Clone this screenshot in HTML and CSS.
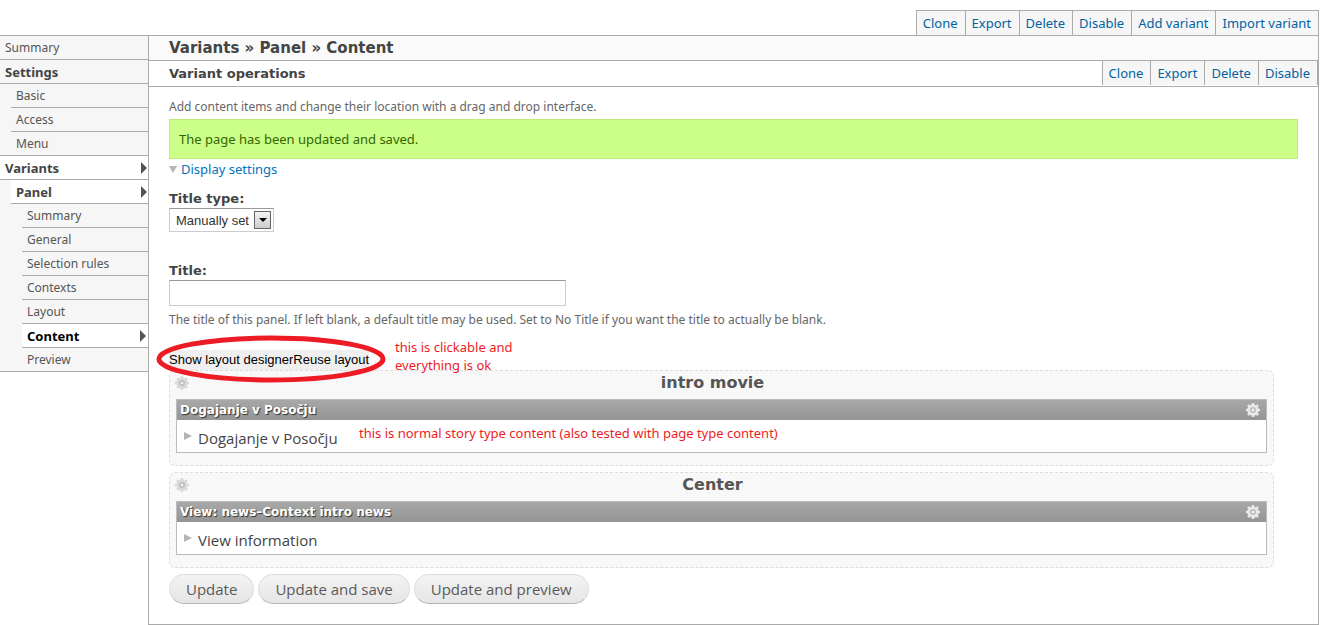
FILE: index.html
```
<!DOCTYPE html>
<html lang="en">
<head>
<meta charset="utf-8">
<title>Variants » Panel » Content</title>
<link rel="stylesheet" href="styles.css">
</head>
<body>
<svg class="defs" aria-hidden="true">
  <symbol id="gear" viewBox="0 0 16 16">
    <path d="M6.900 1h2.200l.5 1.700 1.200.5 1.600-.9 1.400 1.400-.9 1.500.6 1.300 1.600.4v2.200l-1.700.5-.5 1.200.9 1.600-1.400 1.400-1.600-.9-1.200.6L9.100 15H6.900l-.5-1.600-1.200-.6-1.600.9-1.400-1.400.9-1.600-.5-1.200L.9 9.100V6.900l1.700-.4.5-1.300-.9-1.500 1.400-1.400 1.600.9 1.200-.5z"/>
    <circle class="gear-ring" cx="8" cy="8" r="3"/>
    <circle class="gear-hub" cx="8" cy="8" r="1.500"/>
  </symbol>
</svg>

<nav class="actions" aria-label="Page operations">
  <a href="#">Clone</a><a href="#">Export</a><a href="#">Delete</a><a href="#">Disable</a><a href="#">Add variant</a><a href="#">Import variant</a>
</nav>

<div class="layout">
  <nav class="sidebar" aria-label="Page sections">
    <a href="#">Summary</a>
    <a href="#" class="section">Settings</a>
    <div class="sub">
      <a href="#">Basic</a>
      <a href="#">Access</a>
      <a href="#">Menu</a>
    </div>
    <div class="rule"></div>
    <a href="#" class="section open">Variants</a>
    <div class="sub">
      <a href="#" class="section open">Panel</a>
      <div class="sub">
        <a href="#">Summary</a>
        <a href="#">General</a>
        <a href="#">Selection rules</a>
        <a href="#">Contexts</a>
        <a href="#">Layout</a>
        <a href="#" class="section open current">Content</a>
        <a href="#">Preview</a>
      </div>
    </div>
    <div class="rule"></div>
  </nav>

  <main class="main">
    <h1 class="title">Variants » Panel » Content</h1>
    <div class="operations">
      <h2>Variant operations</h2>
      <nav class="actions inner" aria-label="Variant operations">
        <a href="#">Clone</a><a href="#">Export</a><a href="#">Delete</a><a href="#">Disable</a>
      </nav>
    </div>

    <form class="content">
      <p class="hint">Add content items and change their location with a drag and drop interface.</p>
      <div class="message" role="status">The page has been updated and saved.</div>
      <div class="display-toggle"><span class="arrow-down"></span><a href="#">Display settings</a></div>

      <div class="field">
        <label for="title-type">Title type:</label>
        <div class="select">
          <select id="title-type"><option>Manually set</option><option>No title</option></select>
          <span class="select-arrow" aria-hidden="true"></span>
        </div>
      </div>
      <div class="field title-field">
        <label for="title">Title:</label>
        <input id="title" type="text">
        <p class="hint">The title of this panel. If left blank, a default title may be used. Set to No Title if you want the title to actually be blank.</p>
      </div>

      <div class="designer">
        <button type="button">Show layout designer</button><button type="button">Reuse layout</button>
        <svg class="ring" viewBox="0 0 230 48" aria-hidden="true"><ellipse cx="115" cy="24" rx="112" ry="21"/></svg>
        <p class="note note-links">this is clickable and<br>everything is ok</p>
      </div>

      <section class="region">
        <header>
          <button type="button" class="gear" aria-label="Region settings"><svg><use href="#gear"/></svg></button>
          <h3>intro movie</h3>
        </header>
        <article class="pane">
          <div class="pane-title"><h4>Dogajanje v Posočju</h4><button type="button" class="gear" aria-label="Pane settings"><svg><use href="#gear"/></svg></button></div>
          <div class="pane-body"><span class="arrow-right"></span>Dogajanje v Posočju<p class="note note-pane">this is normal story type content (also tested with page type content)</p></div>
        </article>
      </section>

      <section class="region">
        <header>
          <button type="button" class="gear" aria-label="Region settings"><svg><use href="#gear"/></svg></button>
          <h3>Center</h3>
        </header>
        <article class="pane">
          <div class="pane-title"><h4>View: news–Context intro news</h4><button type="button" class="gear" aria-label="Pane settings"><svg><use href="#gear"/></svg></button></div>
          <div class="pane-body"><span class="arrow-right"></span>View information</div>
        </article>
      </section>

      <div class="buttons">
        <button type="button">Update</button>
        <button type="button">Update and save</button>
        <button type="button">Update and preview</button>
      </div>
    </form>
  </main>
</div>
</body>
</html>
```
FILE: styles.css
```
* {
  box-sizing: border-box;
}

body {
  margin: 0;
  padding: 10px 1px 0 0;
  background: #fff;
  color: #444;
  font: 12px/24px "Noto Sans", sans-serif;
}

h1, h2, h3, h4, p {
  margin: 0;
}

h1, h2, h3, h4, label {
  font-family: "DejaVu Sans", sans-serif;
  font-weight: bold;
}

a {
  color: #0074bd;
  text-decoration: none;
}

button {
  padding: 0;
  border: 0;
  background: none;
  color: inherit;
  cursor: pointer;
}

.defs {
  position: absolute;
  width: 0;
  height: 0;
}

/* Operation tabs */
.actions {
  display: flex;
  justify-content: flex-end;
  font-size: 13px;
}

.actions a {
  height: 25px;
  padding: 0 7px 0 6px;
  border: 1px solid #aaa;
  border-width: 1px 0 0 1px;
  background: #f6f6f6;
  color: #0062a0;
}

.actions a:last-child {
  border-right-width: 1px;
}

.actions.inner a {
  height: 24px;
  border-top: 0;
}

/* Sidebar */
.layout {
  display: flex;
  align-items: flex-start;
}

.sidebar {
  flex: 0 0 148px;
  border-top: 1px solid #aaa;
  background: #f6f6f6;
}

.sidebar a {
  display: block;
  height: 24px;
  padding-left: 5px;
  border-bottom: 1px solid #aaa;
  color: #555;
}

.rule {
  height: 1px;
  margin-top: -1px;
  background: #aaa;
}

.sub {
  margin-left: 11px;
}

.sidebar .section {
  color: #444;
  font-size: 13px;
  font-weight: bold;
}

.sidebar .open {
  display: flex;
  align-items: center;
  justify-content: space-between;
  padding-right: 1px;
  background: #fff;
}

.sidebar .open::after {
  content: "";
  border: solid transparent;
  border-width: 6px 0 6px 6px;
  border-left-color: #555;
}

.sidebar .current {
  padding-right: 2px;
  color: #000;
}

/* Main column */
.main {
  flex: 1;
  min-width: 0;
  border: 1px solid #aaa;
}

.title {
  padding-left: 20px;
  border-bottom: 1px solid #aaa;
  background: #fafafa;
  font-size: 15px;
  line-height: 24px;
}

.operations {
  display: flex;
  justify-content: space-between;
  height: 26px;
  padding-left: 20px;
  border-bottom: 1px solid #aaa;
}

.operations h2 {
  font-size: 13px;
  line-height: 25px;
}

.content {
  padding: 12px 20px 20px;
}

.hint {
  color: #666;
  line-height: 16px;
}

.message {
  margin-top: 4px;
  padding: 0 9px;
  border: 1px solid #be7;
  background: #cf8;
  color: #360;
  font-size: 13px;
  line-height: 38px;
}

.display-toggle {
  display: flex;
  align-items: center;
  gap: 4px;
  font-size: 13px;
  line-height: 20px;
}

.arrow-down {
  border: solid transparent;
  border-width: 7px 4px 0;
  border-top-color: #b4b4b4;
}

.field {
  display: flex;
  flex-direction: column;
  align-items: flex-start;
  margin-top: 11px;
}

.field label {
  font-size: 13px;
  line-height: 18px;
}

.title-field {
  margin-top: 30px;
}

.title-field .hint {
  margin-top: 6px;
}

.title-field input {
  width: 397px;
  max-width: 100%;
  height: 26px;
  padding: 0 6px;
  border: 1px solid #ccc;
  border-top-color: #999;
  font: 13px "Liberation Sans", sans-serif;
}

.select {
  display: grid;
  align-items: center;
}

.select select,
.select-arrow {
  grid-area: 1 / 1;
}

.select select {
  height: 24px;
  padding: 0 24px 0 6px;
  border: 1px solid #ccc;
  border-top-color: #999;
  border-radius: 0;
  appearance: none;
  background: #fff;
  color: #333;
  font: 13px "Liberation Sans", sans-serif;
}

.select-arrow {
  display: grid;
  place-items: center;
  justify-self: end;
  width: 17px;
  height: 18px;
  margin-right: 3px;
  border: 1px solid #666;
  background: linear-gradient(#f4f4f4, #ccc);
  pointer-events: none;
}

.select-arrow::after {
  content: "";
  border: solid transparent;
  border-width: 4px 4px 0;
  border-top-color: #000;
}

/* Layout designer links */
.designer {
  position: relative;
  display: flex;
  margin-top: 22px;
}

.designer button {
  height: 20px;
  background: #efefef;
  color: #000;
  font: 13px/20px "Liberation Sans", sans-serif;
}

.ring {
  position: absolute;
  z-index: 1;
  top: -15px;
  left: -13px;
  width: 230px;
  height: 48px;
  fill: none;
  stroke: #ed1c24;
  stroke-width: 5px;
  pointer-events: none;
}

.note {
  position: absolute;
  color: #ed1c24;
  font: 13px/18px "Noto Sans", sans-serif;
  white-space: nowrap;
}

.note-links {
  z-index: 1;
  top: -12px;
  left: 226px;
}

.note-pane {
  top: 4px;
  left: 182px;
}

/* Regions and panes */
.region {
  margin: 0 24px 6px 0;
  padding: 0 6px 12px;
  border: 1px dashed #ddd;
  border-radius: 6px;
  background: #f8f8f8;
}

.region header {
  display: grid;
  grid-template-columns: 16px 1fr 32px;
  height: 28px;
  margin-left: -2px;
}

.region h3 {
  color: #555;
  font-size: 16px;
  line-height: 23px;
  text-align: center;
}

.gear {
  width: 16px;
  height: 16px;
}

.gear svg {
  display: block;
  width: 16px;
  height: 16px;
}

.region header .gear {
  margin-top: 4px;
  fill: #dadada;
}

.gear-ring {
  fill: #bcbcbc;
}

.gear-hub {
  fill: #eee;
}

.pane {
  border: 1px solid #bbb;
  background: #fff;
}

.pane-title {
  display: flex;
  align-items: center;
  justify-content: space-between;
  height: 20px;
  padding: 0 5px 0 3px;
  background: linear-gradient(#a8a8a8, #949494);
  color: #fff;
}

.pane-title h4 {
  font-size: 12px;
  line-height: 20px;
  text-shadow: 1px 1px 1px #333;
}

.pane-title .gear {
  fill: #e8e8e8;
}

.pane-body {
  position: relative;
  display: flex;
  gap: 6px;
  padding: 2px 7px 0;
  height: 32px;
  font: 15px/32px "Open Sans", sans-serif;
}

.arrow-right {
  align-self: flex-start;
  margin-top: 10px;
  border: solid transparent;
  border-width: 4px 0 4px 8px;
  border-left-color: #b4b4b4;
}

/* Form buttons */
.buttons {
  display: flex;
  flex-wrap: wrap;
  gap: 4px;
}

.buttons button {
  height: 30px;
  padding: 0 16px;
  border: 1px solid #ddd;
  border-bottom-color: #b4b4b4;
  border-radius: 15px;
  background: linear-gradient(#f3f3f3, #e5e5e5);
  color: #5a5a5a;
  font: 15px/28px "Open Sans", sans-serif;
}
```
